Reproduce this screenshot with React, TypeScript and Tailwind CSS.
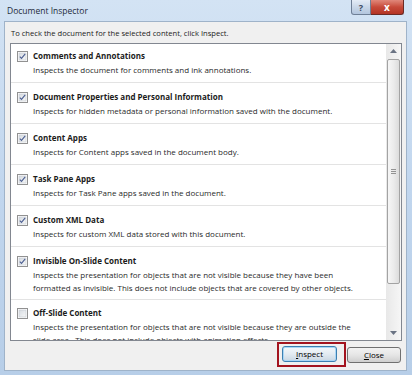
import React from "react";

type Item = { title: string; desc: string[]; checked: boolean };

const items: Item[] = [
  { title: "Comments and Annotations", desc: ["Inspects the document for comments and ink annotations."], checked: true },
  {
    title: "Document Properties and Personal Information",
    desc: ["Inspects for hidden metadata or personal information saved with the document."],
    checked: true,
  },
  { title: "Content Apps", desc: ["Inspects for Content apps saved in the document body."], checked: true },
  { title: "Task Pane Apps", desc: ["Inspects for Task Pane apps saved in the document."], checked: true },
  { title: "Custom XML Data", desc: ["Inspects for custom XML data stored with this document."], checked: true },
  {
    title: "Invisible On-Slide Content",
    desc: [
      "Inspects the presentation for objects that are not visible because they have been",
      "formatted as invisible. This does not include objects that are covered by other objects.",
    ],
    checked: true,
  },
  {
    title: "Off-Slide Content",
    desc: [
      "Inspects the presentation for objects that are not visible because they are outside the",
      "slide area.  This does not include objects with animation effects.",
    ],
    checked: false,
  },
];

function CheckBox({ checked }: { checked: boolean }) {
  return (
    <svg width="11" height="11" viewBox="0 0 11 11" className="shrink-0">
      <defs>
        <linearGradient id="cbfill" x1="0" y1="0" x2="1" y2="1">
          <stop offset="0" stopColor="#d6dbe1" />
          <stop offset="1" stopColor="#f8f8f8" />
        </linearGradient>
      </defs>
      <rect x="0.5" y="0.5" width="10" height="10" fill="#fff" stroke="#919191" />
      <rect x="2" y="2" width="7" height="7" fill="url(#cbfill)" stroke="#c3c8cf" strokeWidth="0.6" />
      {checked ? (
        <path d="M2.8 5.6 L4.5 7.4 L8.2 2.8" fill="none" stroke="#4c5f92" strokeWidth="1.1" />
      ) : null}
    </svg>
  );
}

function ScrollBar() {
  return (
    <div className="flex w-[15px] shrink-0 flex-col bg-gradient-to-r from-[#e8e8e8] to-[#f6f6f6]">
      <div className="flex h-[14px] items-center justify-center">
        <svg width="7" height="4" viewBox="0 0 7 4">
          <path d="M0 4 L3.5 0 L7 4 Z" fill="#6a7383" />
        </svg>
      </div>
      <div className="mx-[1px] mt-[1px] flex h-[225px] items-center justify-center rounded-[2px] border border-[#a3a3a3] bg-gradient-to-r from-[#f6f6f6] via-[#ececec] to-[#dcdcdc]">
        <div className="flex flex-col gap-[1px]">
          <div className="h-[1px] w-[5px] bg-[#939393]" />
          <div className="h-[1px] w-[5px] bg-[#939393]" />
          <div className="h-[1px] w-[5px] bg-[#939393]" />
        </div>
      </div>
      <div className="flex-1" />
      <div className="flex h-[14px] items-center justify-center">
        <svg width="7" height="4" viewBox="0 0 7 4">
          <path d="M0 0 L3.5 4 L7 0 Z" fill="#6a7383" />
        </svg>
      </div>
    </div>
  );
}

function Row({ item, last }: { item: Item; last?: boolean }) {
  const multi = item.desc.length > 1;
  return (
    <div className={last ? "pb-[5px] pl-[6px] pt-[6px]" : "border-b border-[#e3e3e3] pb-[5px] pl-[6px] pt-[7px]"}>
      <div className="flex h-[14px] items-center gap-[5px]">
        <CheckBox checked={item.checked} />
        <span className="whitespace-nowrap font-bold text-[#1b1b1b]">{item.title}</span>
      </div>
      {item.desc.map((line) => (
        <div
          key={line}
          className={multi ? "h-[13px] whitespace-pre pl-[16px] leading-[13px] text-[#2a2a2a]" : "h-[14px] whitespace-pre pl-[16px] text-[#2a2a2a]"}
        >
          {line}
        </div>
      ))}
    </div>
  );
}

export default function App() {
  return (
    <div className="h-[375px] w-[412px] overflow-hidden bg-gradient-to-b from-[#d3e3f4] via-[#c1d6ee] to-[#b7cee8] font-['Open_Sans','Noto_Sans',sans-serif] text-[8px] leading-[14px] text-black">
      <div className="flex h-[21px] items-start justify-between">
        <span className="pl-[7px] pt-[4px] text-[8.5px] text-[#1e2a3a]">Document Inspector</span>
        <div className="mr-[8px] flex">
          <div className="flex h-[15px] w-[20px] items-center justify-center rounded-bl-[3px] border border-t-0 border-[#6e7f96] bg-gradient-to-b from-[#e4ecf6] via-[#c9d7e8] to-[#b3c6de] text-[9px] font-bold leading-none text-[#3b4a60]">
            ?
          </div>
          <div className="flex h-[15px] w-[33px] items-center justify-center rounded-br-[3px] border border-l-0 border-t-0 border-[#6b2a24] bg-gradient-to-b from-[#e0877a] via-[#c74a3a] to-[#b33424] text-[10px] font-bold leading-none text-white">
            x
          </div>
        </div>
      </div>
      <div className="ml-[4px] flex h-[350px] w-[403px] flex-col border border-[#9fb3c9] bg-[#f0f0f0]">
        <div className="pl-[6px] pt-[4px] text-[7.6px] text-[#1b1b1b]">
          To check the document for the selected content, click Inspect.
        </div>
        <div className="ml-[5px] mt-[3px] flex h-[298px] w-[392px] border border-[#828790] bg-white">
          <div className="flex-1 overflow-hidden">
            <div className="-mt-[2px]">
              {items.map((item, i) => (
                <Row key={item.title} item={item} last={i === items.length - 1} />
              ))}
            </div>
          </div>
          <ScrollBar />
        </div>
        <div className="mt-[1px] flex items-start justify-end pr-[5px]">
          <div className="border-2 border-[#a3141f] pb-[3px] pl-[3px] pr-[7px] pt-[2px]">
            <div className="flex h-[16px] w-[55px] items-center justify-center rounded-[3px] border border-[#3c7fb1] bg-gradient-to-b from-[#f4f8fb] via-[#e3ebf2] to-[#c9d7e3] shadow-[inset_0_0_0_1px_#a9d6f5]">
              <span>
                <span className="underline">I</span>nspect
              </span>
            </div>
          </div>
          <div className="ml-[1px] mt-[5px] flex h-[16px] w-[54px] items-center justify-center rounded-[3px] border border-[#707070] bg-gradient-to-b from-[#f2f2f2] via-[#e6e6e6] to-[#cfcfcf]">
            <span>
              <span className="underline">C</span>lose
            </span>
          </div>
        </div>
      </div>
    </div>
  );
}
